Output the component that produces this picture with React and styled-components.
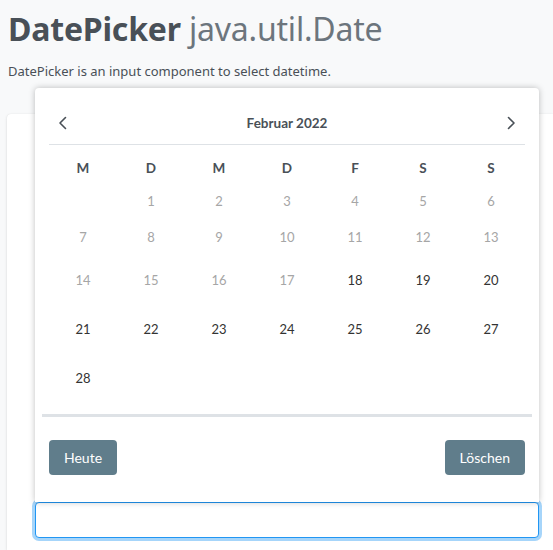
import React from 'react'
import styled, { createGlobalStyle } from 'styled-components'

const GlobalStyle = createGlobalStyle`
  html, body {
    margin: 0;
    padding: 0;
    background: #f8f9fa;
    overflow: hidden;
  }
  body {
    font-family: "Noto Sans", "Open Sans", sans-serif;
    color: #495057;
  }
`

const weekDays = ['M', 'D', 'M', 'D', 'F', 'S', 'S']

const weeks = [
  [null, 1, 2, 3, 4, 5, 6],
  [7, 8, 9, 10, 11, 12, 13],
  [14, 15, 16, 17, 18, 19, 20],
  [21, 22, 23, 24, 25, 26, 27],
  [28, null, null, null, null, null, null],
]

// days before the 18th can't be picked
const isDisabled = (d) => d < 18

const Chevron = ({ dir }) => (
  <svg width="16" height="16" viewBox="0 0 16 16" fill="none">
    <path
      d={dir === 'left' ? 'M10.5 2.5 5 8l5.5 5.5' : 'M5.5 2.5 11 8l-5.5 5.5'}
      stroke="#495057"
      strokeWidth="1.6"
      strokeLinecap="round"
      strokeLinejoin="round"
    />
  </svg>
)

const App = () => {
  return (
    <>
      <GlobalStyle />
      <Intro>
        <Title>
          <strong>DatePicker</strong> <span>java.util.Date</span>
        </Title>
        <Lead>DatePicker is an input component to select datetime.</Lead>
      </Intro>
      <Card>
        <Field>
          <Popup>
            <PopupHeader>
              <NavButton><Chevron dir="left" /></NavButton>
              <MonthTitle>Februar 2022</MonthTitle>
              <NavButton><Chevron dir="right" /></NavButton>
            </PopupHeader>
            <Grid>
              <thead>
                <tr>
                  {weekDays.map((w, i) => (
                    <WeekDay key={i}>{w}</WeekDay>
                  ))}
                </tr>
              </thead>
              <tbody>
                {weeks.map((week, i) => {
                  const tall = week.some((d) => d && !isDisabled(d))
                  return (
                    <DayRow key={i} $tall={tall}>
                      {week.map((d, j) => (
                        <Day key={j} $disabled={d && isDisabled(d)}>
                          {d}
                        </Day>
                      ))}
                    </DayRow>
                  )
                })}
              </tbody>
            </Grid>
            <Divider />
            <Footer>
              <Button>Heute</Button>
              <Button>Löschen</Button>
            </Footer>
          </Popup>
          <Input autoFocus />
        </Field>
      </Card>
    </>
  )
}

const Intro = styled.div`
  padding: 8px 8px 0;
  height: 114px;
  box-sizing: border-box;
`

const Title = styled.h1`
  margin: 0;
  font-size: 32px;
  line-height: 42px;
  font-weight: 400;
  letter-spacing: -0.2px;
  strong {
    font-weight: 700;
    color: #495057;
  }
  span {
    color: #6c757d;
  }
`

const Lead = styled.p`
  margin: 11px 0 0;
  font-size: 13px;
  line-height: 20px;
  color: #495057;
`

const Card = styled.div`
  margin-left: 7px;
  background: #fff;
  border-radius: 4px 0 0 0;
  box-shadow: 0 1px 3px rgba(0, 0, 0, 0.12), 0 0 1px rgba(0, 0, 0, 0.1);
  padding: 388px 14px 12px 28px;
`

const Field = styled.div`
  position: relative;
  width: 504px;
`

const Popup = styled.div`
  position: absolute;
  left: 0;
  right: 0;
  bottom: 100%;
  background: #fff;
  border-radius: 4px 4px 0 0;
  box-shadow: 0 0 6px rgba(0, 0, 0, 0.25);
  padding-top: 14px;
  font-family: Lato, "Noto Sans", sans-serif;
  color: #333;
  z-index: 2;
`

const PopupHeader = styled.div`
  margin: 0 14px;
  height: 42px;
  border-bottom: 1px solid #dee2e6;
  display: flex;
  align-items: center;
  justify-content: space-between;
`

const NavButton = styled.button`
  width: 28px;
  height: 28px;
  border: none;
  background: none;
  padding: 0;
  display: flex;
  align-items: center;
  justify-content: center;
  cursor: pointer;
`

const MonthTitle = styled.div`
  font-weight: 700;
  font-size: 13.5px;
  color: #495057;
`

const Grid = styled.table`
  margin: 0 14px;
  width: 476px;
  border-collapse: collapse;
  table-layout: fixed;
`

const WeekDay = styled.th`
  box-sizing: border-box;
  height: 38px;
  padding: 13px 0 0;
  vertical-align: top;
  font-size: 13.5px;
  line-height: 20px;
  font-weight: 700;
  color: #495057;
`

const DayRow = styled.tr`
  height: ${({ $tall }) => ($tall ? '49px' : '36px')};
`

const Day = styled.td`
  padding: 0;
  text-align: center;
  vertical-align: middle;
  font-size: 13px;
  color: ${({ $disabled }) => ($disabled ? '#a6a6a6' : '#333')};
`

const Divider = styled.div`
  margin: 12px 7px 0;
  height: 3px;
  background: #dee2e6;
`

const Footer = styled.div`
  display: flex;
  justify-content: space-between;
  padding: 23px 14px 27px;
`

const Button = styled.button`
  height: 35px;
  padding: 0 15px;
  border: none;
  border-radius: 4px;
  background: #607d8b;
  color: #fff;
  font-family: Lato, "Noto Sans", sans-serif;
  font-size: 14px;
  cursor: pointer;
`

const Input = styled.input`
  display: block;
  box-sizing: border-box;
  width: 504px;
  height: 36px;
  border: 1px solid #2196f3;
  border-radius: 4px;
  outline: none;
  box-shadow: 0 0 0 3px #a6d5fa;
  background: #fff;
  font-family: Lato, "Noto Sans", sans-serif;
  font-size: 14px;
`

export default App
